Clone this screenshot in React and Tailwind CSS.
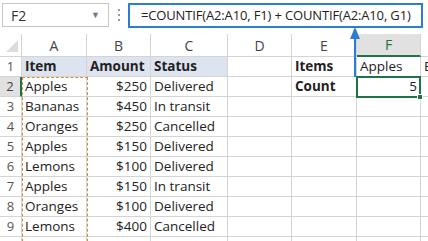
import React from "react";

const cols = ["A", "B", "C", "D", "E", "F", "G"];
const widths = ["w-[65px]", "w-[64px]", "w-[77px]", "w-[64px]", "w-[65px]", "w-[64px]", "w-[64px]"];

const rows = [
  ["Item", "Amount", "Status", "", "Items", "Apples", "Bananas"],
  ["Apples", "$250", "Delivered", "", "Count", "5", ""],
  ["Bananas", "$450", "In transit", "", "", "", ""],
  ["Oranges", "$250", "Cancelled", "", "", "", ""],
  ["Apples", "$150", "Delivered", "", "", "", ""],
  ["Lemons", "$100", "Delivered", "", "", "", ""],
  ["Apples", "$150", "In transit", "", "", "", ""],
  ["Oranges", "$100", "Delivered", "", "", "", ""],
  ["Lemons", "$400", "Cancelled", "", "", "", ""],
  ["", "", "", "", "", "", ""],
];

function Cell({ value, col, row }) {
  const isHeader = row === 0 && col < 3;
  const bold = isHeader || (col === 4 && row < 2);
  const right = (col === 1 && row > 0) || (col === 5 && row === 1);
  return (
    <div
      className={`${widths[col]} h-[20px] shrink-0 border-r border-b border-[#d4d4d4] flex items-center overflow-hidden whitespace-nowrap px-[3px] ${
        isHeader ? "bg-[#dde3ef]" : "bg-white"
      } ${right ? "justify-end" : ""} ${bold ? "font-bold" : ""}`}
    >
      {value}
    </div>
  );
}

export default function App() {
  return (
    <div className="relative w-[428px] h-[241px] overflow-hidden bg-white font-['Open_Sans',sans-serif] text-[13.5px] text-[#222]">
      {/* formula bar */}
      <div className="flex h-[34px] items-start pt-[3px]">
        <div className="ml-[2px] flex h-[24px] w-[107px] items-center justify-between border border-[#c6c6c6] pl-[8px] pr-[8px] text-[14px] text-[#333]">
          <span>F2</span>
          <span className="text-[9px] text-[#777]">▼</span>
        </div>
        <div className="flex w-[19px] h-[24px] flex-col items-center justify-center gap-[3px]">
          <div className="h-[2px] w-[2px] bg-[#999]" />
          <div className="h-[2px] w-[2px] bg-[#999]" />
          <div className="h-[2px] w-[2px] bg-[#999]" />
        </div>
        <div className="flex h-[25px] w-[295px] items-center border-2 border-[#2b7cd3] pl-[11px] text-[13px] tracking-[-0.15px] text-[#222] whitespace-nowrap">
          =COUNTIF(A2:A10, F1) + COUNTIF(A2:A10, G1)
        </div>
      </div>

      {/* column headers */}
      <div className="flex h-[23px]">
        <div className="relative w-[22px] shrink-0 border-r border-b border-[#d4d4d4]">
          <svg className="absolute bottom-[4px] right-[3px]" width="12" height="12" viewBox="0 0 12 12">
            <polygon points="12,0 12,12 0,12" fill="#dcdcdc" />
          </svg>
        </div>
        {cols.map((c, i) => (
          <div
            key={c}
            className={`${widths[i]} shrink-0 flex items-center justify-center text-[14px] ${
              c === "F"
                ? "bg-[#e1e1e1] border-b-2 border-b-[#217346] text-[#217346] border-r border-r-[#d4d4d4]"
                : "border-r border-b border-[#d4d4d4] text-[#444]"
            }`}
          >
            {c}
          </div>
        ))}
      </div>

      {/* rows */}
      {rows.map((r, ri) => (
        <div key={ri} className="flex">
          <div
            className={`w-[22px] h-[20px] shrink-0 flex items-center justify-center border-b border-[#d4d4d4] text-[13px] ${
              ri === 1
                ? "bg-[#e1e1e1] border-r-2 border-r-[#217346] text-[#444]"
                : "border-r text-[#555]"
            }`}
          >
            {ri + 1}
          </div>
          {r.map((v, ci) => (
            <Cell key={ci} value={v} col={ci} row={ri} />
          ))}
        </div>
      ))}

      {/* copy range marquee */}
      <div className="absolute left-[22px] top-[77px] h-[180px] w-[66px] border border-dashed border-[#d88a3c]" />

      {/* active cell */}
      <div className="absolute left-[356px] top-[76px] h-[22px] w-[65px] border-2 border-[#217346]">
        <div className="absolute -bottom-[4px] -right-[4px] h-[6px] w-[6px] border border-white bg-[#217346]" />
      </div>

      {/* arrow */}
      <svg className="absolute left-[350px] top-[27px]" width="10" height="50" viewBox="0 0 10 50">
        <polygon points="5,0 10,12 0,12" fill="#2b7cd3" />
        <rect x="4" y="10" width="2" height="40" fill="#2b7cd3" />
      </svg>
    </div>
  );
}
